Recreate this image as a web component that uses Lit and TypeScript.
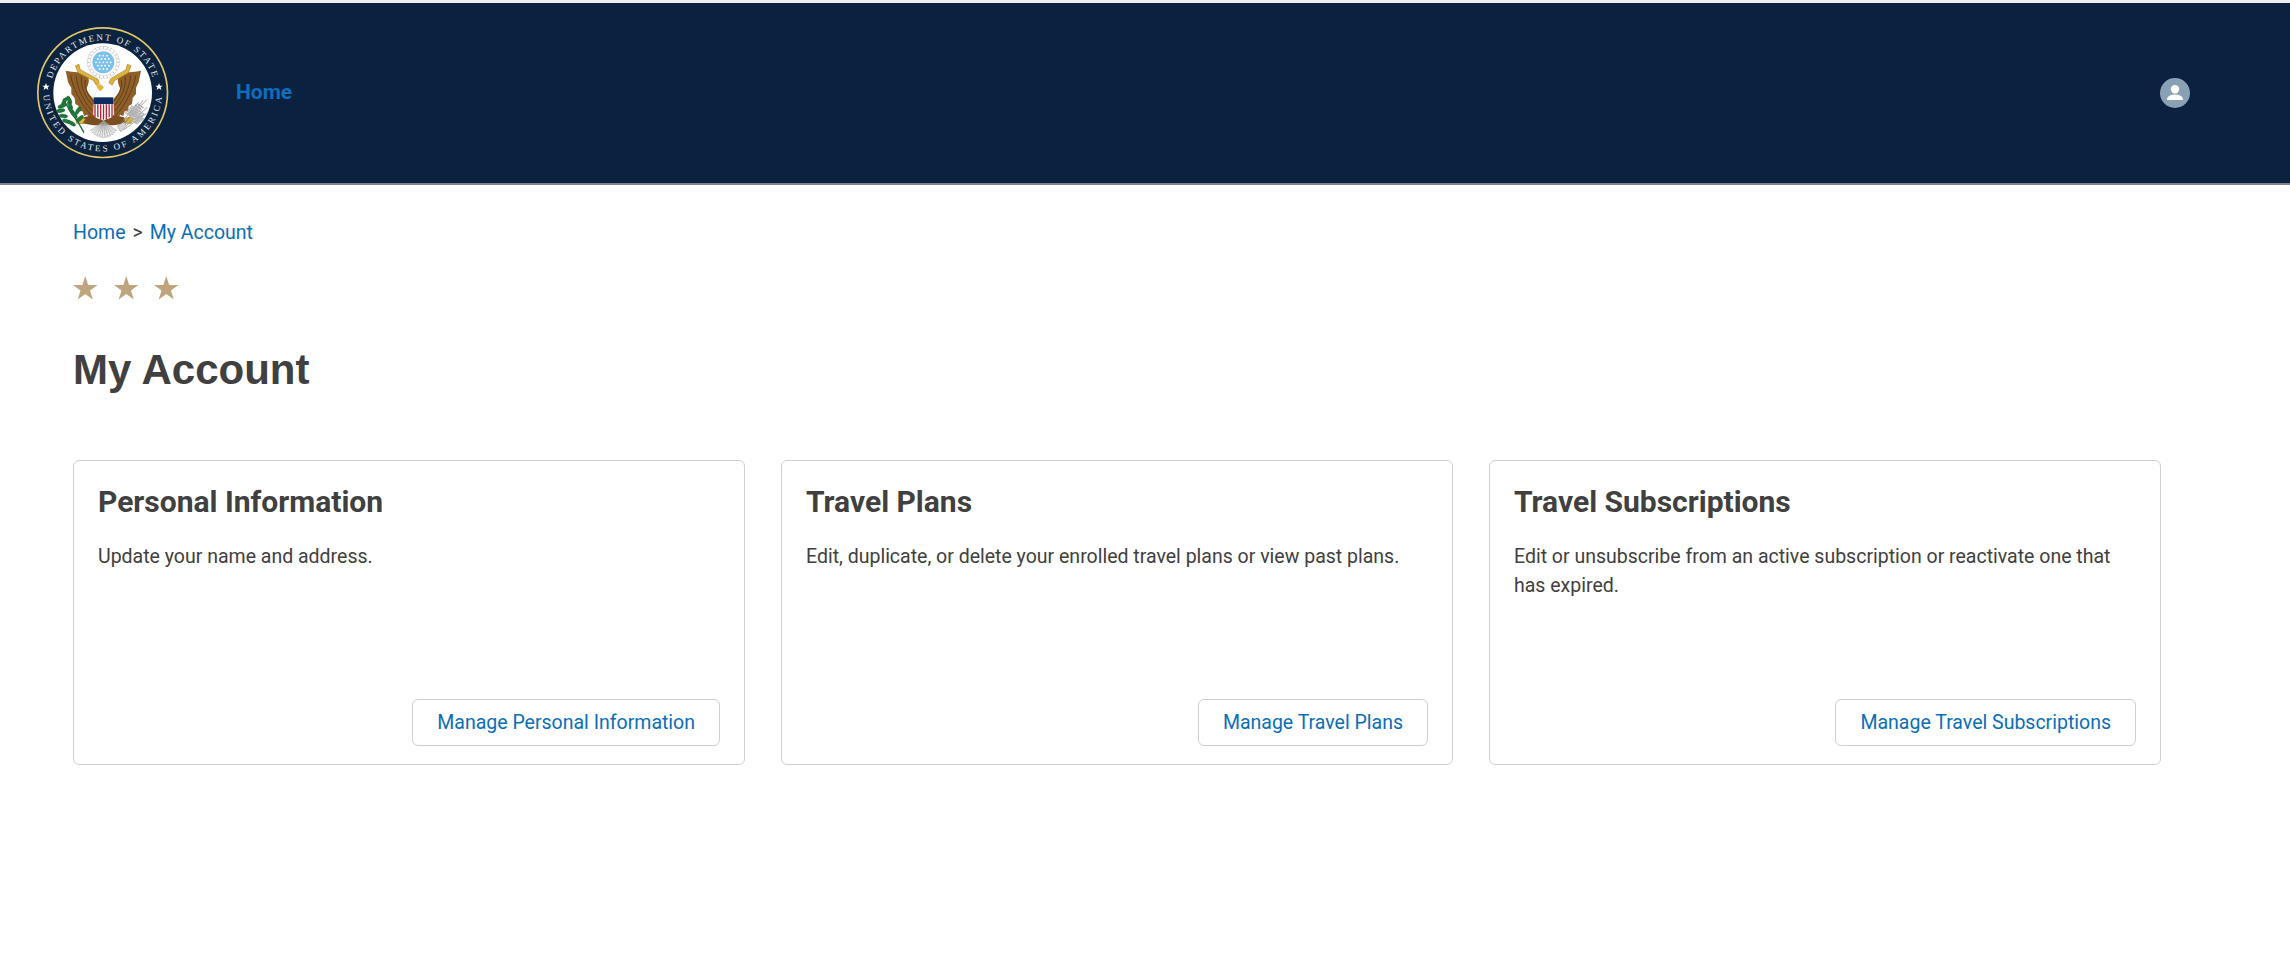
import { LitElement, html, css, svg } from "lit";
import { customElement } from "lit/decorators.js";

const starPts = "12.25,0 15.2,8.9 24.5,8.9 17,14.5 19.8,23.5 12.25,18 4.7,23.5 7.5,14.5 0,8.9 9.3,8.9";

function seal() {
  const dots: [number, number][] = [];
  for (const [row, n] of [[-20, 3], [-10, 4], [0, 5], [10, 4], [20, 3]] as [number, number][]) {
    for (let i = 0; i < n; i++) dots.push([220 + (i - (n - 1) / 2) * 11, 127 + row]);
  }
  const rays = Array.from({ length: 24 }, (_, i) => (i / 24) * Math.PI * 2);
  const tail = Array.from({ length: 11 }, (_, i) => -52 + i * 10.4);
  const leaves: [number, number, number][] = [
    [103, 244, -60], [118, 240, -115], [96, 258, -20], [120, 256, -120], [92, 272, -10],
    [124, 272, -130], [100, 288, 5], [132, 284, -135], [110, 304, 20], [144, 272, -60], [125, 310, 30], [150, 296, -45],
  ];
  const arrows = [
    [268, 322, 352, 238], [272, 326, 340, 240], [276, 328, 352, 262], [266, 318, 326, 246], [280, 330, 350, 280],
  ];
  const scallops = [-1, -0.5, 0, 0.5, 1];
  return svg`
    <svg class="seal" viewBox="0 0 450 450" role="img" aria-label="Department of State seal">
      <defs>
        <path id="arcTop" d="M 65 183 A 157 157 0 0 1 371 183" fill="none"></path>
        <path id="arcBottom" d="M 41 235 A 178 178 0 0 0 395 235" fill="none"></path>
      </defs>
      <circle cx="218" cy="218" r="197" fill="#e3c767"></circle>
      <circle cx="218" cy="218" r="192" fill="#0c2340"></circle>
      <circle cx="218" cy="218" r="148" fill="#fff"></circle>
      <text class="ring top" text-anchor="middle"><textPath href="#arcTop" startOffset="50%">DEPARTMENT OF STATE</textPath></text>
      <text class="ring bottom" text-anchor="middle"><textPath href="#arcBottom" startOffset="50%">UNITED STATES OF AMERICA</textPath></text>
      <polygon points="48,189 51,197 59,197 53,202 55,210 48,205 41,210 43,202 37,197 45,197" fill="#fff"></polygon>
      <polygon points="387,189 390,197 398,197 392,202 394,210 387,205 380,210 382,202 376,197 384,197" fill="#fff"></polygon>

      <g fill="none" stroke="#8e8e8e" stroke-width="1.6">
        <circle cx="220" cy="127" r="48" stroke-dasharray="3 2"></circle>
        <circle cx="220" cy="127" r="40" stroke="#c4c4c4"></circle>
        ${rays.map((a) => svg`<line x1=${220 + 41 * Math.cos(a)} y1=${127 + 41 * Math.sin(a)} x2=${220 + 47 * Math.cos(a)} y2=${127 + 47 * Math.sin(a)}></line>`)}
      </g>
      <circle cx="220" cy="127" r="33" fill="#7cc0ee"></circle>
      ${dots.map(([x, y]) => svg`<circle cx=${x} cy=${y} r="2.8" fill="#fff"></circle>`)}

      <path d="M107 152 C130 157 155 154 172 168 C180 178 176 192 170 204 C172 222 186 230 192 240 L190 292 L176 296 L172 284 L162 288 L158 274 L148 274 L146 258 L136 252 L134 234 L124 222 L124 204 L114 186 Z" fill="#8f5f2a"></path>
      <path d="M333 152 C310 157 285 154 268 168 C260 178 264 192 270 204 C268 222 254 230 250 240 L252 292 L266 296 L270 284 L280 288 L284 274 L294 274 L296 258 L306 252 L308 234 L318 222 L318 204 L326 186 Z" fill="#8f5f2a"></path>
      <g stroke="#54330f" stroke-width="2.2" fill="none">
        <path d="M122 166 C130 205 150 250 184 286"></path>
        <path d="M138 166 C142 205 158 240 186 272"></path>
        <path d="M154 170 C152 205 166 232 188 256"></path>
        <path d="M166 180 C162 205 174 224 190 244"></path>
        <path d="M318 166 C310 205 290 250 258 286"></path>
        <path d="M302 166 C298 205 282 240 256 272"></path>
        <path d="M286 170 C288 205 274 232 254 256"></path>
        <path d="M274 180 C278 205 266 224 252 244"></path>
      </g>
      <path d="M136 137 L147 133 L151 149 L204 178 L209 193 L198 195 L191 182 L145 159 Z" fill="#e0b43c" stroke="#8a6a1c" stroke-width="1.5"></path>
      <path d="M303 137 L292 133 L288 149 L242 176 L236 191 L247 195 L253 182 L295 159 Z" fill="#e0b43c" stroke="#8a6a1c" stroke-width="1.5"></path>

      <path d="M160 292 L192 285 L250 285 L282 292 L286 310 L252 316 L190 316 L156 310 Z" fill="#7a4e1e"></path>

      <path d="M202 205 C202 190 214 186 228 187 C242 189 253 202 254 218 L252 236 L190 236 C194 224 200 218 202 205 Z" fill="#fff" stroke="#c8c8c8" stroke-width="1"></path>
      <path d="M198 197 L212 193 L222 202 L212 214 L205 208 Z" fill="#e0b43c"></path>

      <rect x="191" y="232" width="59" height="21" fill="#0f2c63"></rect>
      <path d="M191 253 H250 V284 C250 293 232 296 220.5 302 C209 296 191 293 191 284 Z" fill="#fff"></path>
      ${[195, 203.5, 212, 220.5, 229, 237.5, 246].map((x) => svg`<path d="M${x - 2} 253 h4 V${x >= 212 && x <= 229 ? 299 : 292} h-4 Z" fill="#b0243a"></path>`)}

      <g stroke="#8a8a8a" stroke-width="1.4">
        ${tail.map((a) => {
          const r = (a * Math.PI) / 180;
          const len = 50 - Math.abs(a) * 0.08;
          return svg`<path d="M221 303 L${221 + len * Math.sin(r) - 3.5} ${303 + len * Math.cos(r)} L${221 + len * Math.sin(r) + 3.5} ${303 + len * Math.cos(r)} Z" fill="#fafafa"></path>`;
        })}
      </g>

      <path d="M137 296 L155 291 L166 298 L158 311 L140 311 Z" fill="#e0b43c" stroke="#8a6a1c" stroke-width="1.5"></path>
      <path d="M282 296 L302 291 L311 298 L303 310 L286 310 Z" fill="#e0b43c" stroke="#8a6a1c" stroke-width="1.5"></path>

      <path d="M100 236 C112 262 132 290 144 306 L162 338" fill="none" stroke="#14632f" stroke-width="4"></path>
      ${leaves.map(
        ([x, y, a]) => svg`<ellipse cx=${x} cy=${y} rx="13" ry="5.5" transform=${`rotate(${a} ${x} ${y})`} fill="#1f7a3a" stroke="#0f4f24" stroke-width="1"></ellipse>`
      )}

      ${arrows.map(
        ([x1, y1, x2, y2]) => svg`
          <line x1=${x1} y1=${y1} x2=${x2} y2=${y2} stroke="#7d7d7d" stroke-width="2"></line>
          ${scallops.map((s) => {
            const t = 0.62 + s * 0.14;
            const px = x1 + (x2 - x1) * t;
            const py = y1 + (y2 - y1) * t;
            return svg`<path d="M${px - 7} ${py - 5} L${px + 7} ${py + 5}" stroke="#b5b5b5" stroke-width="5" stroke-linecap="round"></path>`;
          })}
        `
      )}
      <path d="M262 318 L282 306 L290 318 L272 335 Z" fill="#d4d4d4" stroke="#8d8d8d" stroke-width="1.5"></path>
    </svg>
  `;
}

@customElement("app-root")
export class AppRoot extends LitElement {
  static styles = css`
    :host {
      display: block;
      background: #fff;
      min-height: 954px;
      font-family: Roboto, "Liberation Sans", sans-serif;
      color: #404040;
    }
    .strip {
      height: 3px;
      background: #eeeeee;
    }
    header {
      height: 180px;
      background: #0a2240;
      border-bottom: 2px solid #7f858c;
      display: flex;
      align-items: center;
      padding: 0 100px 0 30px;
    }
    .seal {
      width: 150px;
      height: 150px;
      flex: none;
      display: block;
      margin-top: 4px;
    }
    .ring {
      font-family: "Liberation Serif", serif;
      font-size: 27px;
      fill: #e6e9ee;
    }
    .top {
      letter-spacing: 5.5px;
    }
    .bottom {
      letter-spacing: 7px;
    }
    .home {
      margin: 0 0 3px 56px;
      color: #0d6ebd;
      font-weight: 700;
      font-size: 21px;
      text-decoration: none;
    }
    .spacer {
      flex: 1;
    }
    .user {
      width: 30px;
      height: 30px;
      display: block;
    }
    main {
      padding: 36px 0 0 73px;
    }
    .crumbs {
      display: flex;
      align-items: baseline;
      gap: 7px;
      font-size: 19.5px;
      line-height: 24px;
    }
    .crumbs a {
      color: #0a6eb8;
      text-decoration: none;
    }
    .stars {
      display: flex;
      gap: 16.2px;
      margin-top: 31px;
    }
    .stars svg {
      width: 24.5px;
      height: 24px;
      display: block;
    }
    h1 {
      margin: 45px 0 0;
      font-family: "Liberation Sans", Arial, sans-serif;
      font-weight: 700;
      font-size: 42px;
      line-height: 50px;
      color: #404040;
    }
    .cards {
      display: grid;
      grid-template-columns: repeat(3, 672px);
      gap: 36px;
      margin-top: 65px;
    }
    .card {
      box-sizing: border-box;
      height: 305px;
      border: 1px solid #d0d0d0;
      border-radius: 6px;
      padding: 23px 24px 18px;
      display: flex;
      flex-direction: column;
    }
    h2 {
      margin: 0;
      font-size: 30px;
      line-height: 36px;
      font-weight: 700;
      color: #404040;
    }
    p {
      margin: 22px 0 0;
      font-size: 19.5px;
      line-height: 29px;
      color: #404040;
    }
    .btn {
      margin-top: auto;
      align-self: flex-end;
      box-sizing: border-box;
      height: 47px;
      padding: 0 24px;
      display: flex;
      align-items: center;
      border: 1px solid #cfcfcf;
      border-radius: 6px;
      font-size: 19.5px;
      color: #0a6eb8;
      text-decoration: none;
    }
  `;

  render() {
    const cards = [
      ["Personal Information", "Update your name and address.", "Manage Personal Information"],
      ["Travel Plans", "Edit, duplicate, or delete your enrolled travel plans or view past plans.", "Manage Travel Plans"],
      ["Travel Subscriptions", "Edit or unsubscribe from an active subscription or reactivate one that has expired.", "Manage Travel Subscriptions"],
    ];
    return html`
      <div class="strip"></div>
      <header>
        ${seal()}
        <a class="home" href="#">Home</a>
        <div class="spacer"></div>
        <svg class="user" viewBox="0 0 30 30" aria-label="Account">
          <circle cx="15" cy="15" r="15" fill="#8aa0b4"></circle>
          <circle cx="15" cy="11.2" r="4.2" fill="#fff"></circle>
          <path d="M7 22 C7 18 11 16.6 15 16.6 C19 16.6 23 18 23 22 Z" fill="#fff"></path>
        </svg>
      </header>
      <main>
        <nav class="crumbs"><a href="#">Home</a><span>&gt;</span><a href="#">My Account</a></nav>
        <div class="stars">
          ${[0, 1, 2].map(
            () => html`<svg viewBox="0 0 24.5 24"><polygon points=${starPts} fill="#bfa57d"></polygon></svg>`
          )}
        </div>
        <h1>My Account</h1>
        <section class="cards">
          ${cards.map(
            ([t, d, b]) => html`
              <article class="card">
                <h2>${t}</h2>
                <p>${d}</p>
                <a class="btn" href="#">${b}</a>
              </article>
            `
          )}
        </section>
      </main>
    `;
  }
}
